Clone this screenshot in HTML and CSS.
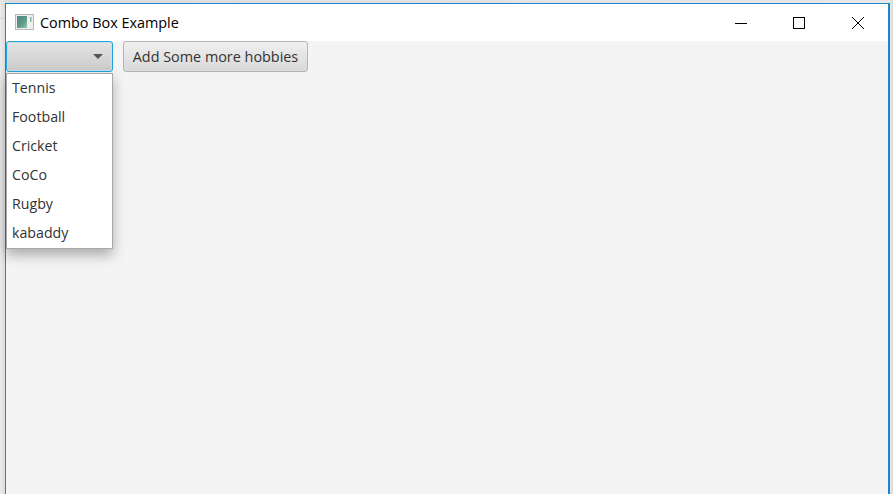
FILE: index.html
```html
<!DOCTYPE html>
<html lang="en">
<head>
<meta charset="utf-8">
<title>Combo Box Example</title>
<link rel="stylesheet" href="styles.css">
</head>
<body>
<div class="desktop">
  <div class="window">
    <header class="titlebar">
      <svg class="app-icon" width="20" height="17" viewBox="0 0 20 17" aria-hidden="true">
        <defs>
          <linearGradient id="g" x1="0" y1="0" x2="1" y2="1">
            <stop offset="0" stop-color="#4f7f95"/>
            <stop offset="0.6" stop-color="#5f9f85"/>
            <stop offset="1" stop-color="#9cc4ad"/>
          </linearGradient>
        </defs>
        <rect x="0.5" y="0.5" width="18" height="15" fill="#efefef" stroke="#b8b8b8"/>
        <rect x="2" y="2" width="10" height="12" fill="url(#g)"/>
        <rect x="15" y="3" width="1.5" height="5" fill="#8fb5a8"/>
      </svg>
      <span class="title">Combo Box Example</span>
      <div class="controls">
        <button class="ctl" aria-label="Minimize"><svg width="12" height="12" viewBox="0 0 12 12"><path d="M0 6.5H12" stroke="#000" fill="none"/></svg></button>
        <button class="ctl" aria-label="Maximize"><svg width="12" height="12" viewBox="0 0 12 12"><rect x="0.5" y="0.5" width="11" height="11" stroke="#000" fill="none"/></svg></button>
        <button class="ctl" aria-label="Close"><svg width="12" height="12" viewBox="0 0 12 12"><path d="M0 0L12 12M12 0L0 12" stroke="#000" fill="none"/></svg></button>
      </div>
    </header>
    <main class="content">
      <div class="toolbar">
        <div class="combo">
          <span class="arrow"></span>
          <ul class="popup">
            <li>Tennis</li>
            <li>Football</li>
            <li>Cricket</li>
            <li>CoCo</li>
            <li>Rugby</li>
            <li>kabaddy</li>
          </ul>
        </div>
        <button class="btn">Add Some more hobbies</button>
      </div>
    </main>
  </div>
</div>
</body>
</html>
```

FILE: styles.css
```css
* { box-sizing: border-box; }
html, body { margin: 0; height: 100%; overflow: hidden; }
body { font-family: "Open Sans", "Noto Sans", sans-serif; }
.desktop {
  height: 494px;
  padding: 3px 3px 0 5px;
  background:
    linear-gradient(#d8d8d8, #d8d8d8) 237px 0 / 1px 3px no-repeat,
    linear-gradient(#d8d8d8, #d8d8d8) 0 18px / 5px 1px no-repeat,
    linear-gradient(90deg, #ececec 0, #dcdcdc 5px, #e8e8e8 890px, #d8d8d8 893px);
}
.window {
  height: 100%;
  display: flex;
  flex-direction: column;
  border: solid #1a86d0;
  border-width: 1px 2px 0 1px;
  background: #f4f4f4;
}
.titlebar {
  height: 37px;
  flex: none;
  display: flex;
  align-items: center;
  background: #fff;
  padding-left: 9px;
}
.app-icon { margin-right: 5px; }
.title { font-size: 14.4px; color: #000; }
.controls { margin-left: auto; display: flex; padding-right: 1px; }
.ctl {
  width: 58.5px;
  height: 37px;
  padding: 0;
  border: 0;
  background: none;
  display: flex;
  align-items: center;
  justify-content: center;
}
.content { flex: 1; }
.toolbar { display: flex; gap: 10px; }
.combo {
  position: relative;
  width: 107px;
  height: 31px;
  border: 1px solid #1fa3dc;
  border-radius: 3px;
  background: linear-gradient(#e4e4e4, #cbcbcb);
  box-shadow: inset 0 0 0 1px #c9dfe8;
}
.arrow {
  position: absolute;
  right: 9px;
  top: 12px;
  width: 0;
  height: 0;
  border-style: solid;
  border-width: 5px 5px 0;
  border-color: #555 transparent transparent;
}
.popup {
  position: absolute;
  left: -1px;
  top: 31px;
  width: 107px;
  margin: 0;
  padding: 0;
  list-style: none;
  background: #fff;
  border: 1px solid #a8a8a8;
  box-shadow: 0 6px 12px rgba(0, 0, 0, 0.3);
}
.popup li {
  height: 29px;
  line-height: 28px;
  padding-left: 5px;
  font-size: 14.2px;
  color: #333;
}
.btn {
  width: 185px;
  height: 31px;
  padding: 0;
  border: 1px solid #b4b4b4;
  border-radius: 3px;
  background: linear-gradient(#efefef, #d9d9d9);
  font-family: inherit;
  font-size: 14.4px;
  color: #333;
}
```
